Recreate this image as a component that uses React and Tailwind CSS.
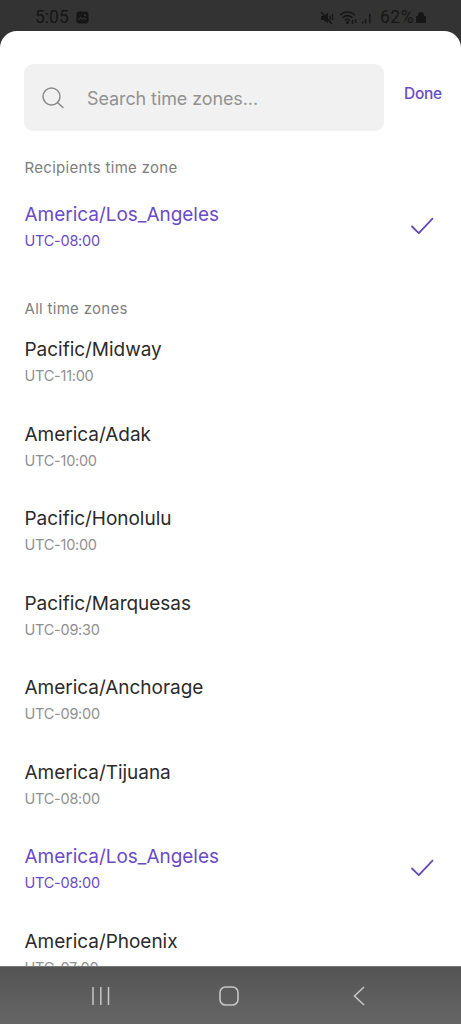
import { useState } from 'react';

const ZONES = [
  { name: 'Pacific/Midway', offset: 'UTC-11:00' },
  { name: 'America/Adak', offset: 'UTC-10:00' },
  { name: 'Pacific/Honolulu', offset: 'UTC-10:00' },
  { name: 'Pacific/Marquesas', offset: 'UTC-09:30' },
  { name: 'America/Anchorage', offset: 'UTC-09:00' },
  { name: 'America/Tijuana', offset: 'UTC-08:00' },
  { name: 'America/Los_Angeles', offset: 'UTC-08:00' },
  { name: 'America/Phoenix', offset: 'UTC-07:00' },
];

const StatusBar = () => (
  <div className="flex h-[31px] shrink-0 items-center pt-[4px] pl-[35px] pr-[35px] text-[17.5px] text-[#161616]">
    <span className="font-['Roboto',sans-serif]">5:05</span>
    <svg className="ml-[7px] h-[13px] w-[13px]" viewBox="0 0 14 14">
      <rect x="0.5" y="0.5" width="13" height="13" rx="3" fill="#161616" />
      <path d="M2.5 9.5 5 7l2 2 2-1.5 2.5 2" fill="none" stroke="#333" strokeWidth="1.2" />
      <circle cx="9.5" cy="4.5" r="1.2" fill="#333" />
    </svg>

    {/* Muted, wifi, signal */}
    <svg className="ml-auto h-[14px] w-[14px]" viewBox="0 0 14 14">
      <path d="M1 5h3l4-3.5v11L4 9H1z" fill="#161616" />
      <path d="M1 1l11 12M10 4.5v5M12.5 3v6" fill="none" stroke="#161616" strokeWidth="1.3" />
    </svg>
    <svg className="ml-[5px] h-[15px] w-[19px]" viewBox="0 0 19 15" fill="none" stroke="#161616" strokeWidth="1.5">
      <path d="M1 5c4.500-4 10.500-4 15 0M3.500 7.800c3-2.600 7-2.600 10 0M6 10.500c1.500-1.400 3.500-1.400 5 0" />
      <circle cx="8.500" cy="12.500" r="0.800" fill="#161616" />
      <path d="M13.500 10v4M16.500 9v4" />
    </svg>
    <svg className="ml-[3px] h-[12px] w-[12px]" viewBox="0 0 12 13" stroke="#161616" strokeWidth="1.5">
      <path d="M1.500 10v2.500M4.500 8v4.500M9 2v10.500" />
    </svg>
    <span className="ml-[7px] font-['Roboto',sans-serif] text-[17.5px] tracking-[0.5px]">62%</span>
    <svg className="ml-[2px] h-[11px] w-[10px]" viewBox="0 0 10 11" fill="#161616">
      <path d="M2 4V3a3 3 0 0 1 6 0v1h1a1 1 0 0 1 1 1v5a1 1 0 0 1-1 1H1a1 1 0 0 1-1-1V5a1 1 0 0 1 1-1z" />
    </svg>
  </div>
);

const SearchIcon = () => (
  <svg className="h-[22px] w-[22px] shrink-0" viewBox="0 0 22 22" fill="none" stroke="#8b8b8b" strokeWidth="1.5" strokeLinecap="round">
    <circle cx="9.5" cy="9.500" r="8.500" />
    <path d="M15.600 15.600 21 20.500" />
  </svg>
);

const CheckMark = () => (
  <svg className="mr-[27px] h-[18px] w-[24px] shrink-0" viewBox="0 0 24 18" fill="none" stroke="#6249b5" strokeWidth="1.800" strokeLinecap="round" strokeLinejoin="round">
    <path d="M2 9.500 8.800 16.200 22.500 1.700" />
  </svg>
);

const ZoneRow = ({ zone, selected, onSelect }) => (
  <button
    onClick={() => onSelect(zone.name)}
    className="flex h-[84.5px] w-full shrink-0 items-start pl-[24.5px] text-left"
  >
    <span className="flex-1">
      <span className={`block text-[19px] leading-[26px] tracking-[-0.03px] ${selected ? 'text-[#6b4bc5]' : 'text-[#2b2b2b]'}`}>
        {zone.name}
      </span>
      <span className={`mt-[3px] block text-[14.5px] leading-[20px] tracking-[-0.25px] ${selected ? 'text-[#6b4bc5]' : 'text-[#909090]'}`}>
        {zone.offset}
      </span>
    </span>
    {selected && (
      <span className="mt-[14.5px]">
        <CheckMark />
      </span>
    )}
  </button>
);

const NavBar = () => (
  <div className="flex h-[58px] shrink-0 items-center border-t border-[#777] bg-linear-to-b from-[#545454] to-[#666] pt-px pl-[91px]">
    <svg className="h-[20px] w-[20px]" viewBox="0 0 20 20" stroke="#c6c6c6" strokeWidth="1.500">
      <path d="M2 1v18M9.800 1v18M17.500 1v18" />
    </svg>
    <svg className="ml-[108px] h-[20px] w-[20px]" viewBox="0 0 20 20" fill="none" stroke="#c6c6c6" strokeWidth="1.600">
      <rect x="1" y="1" width="18" height="18" rx="5.500" />
    </svg>
    <svg className="ml-[114px] h-[20px] w-[12px]" viewBox="0 0 12 20" fill="none" stroke="#c6c6c6" strokeWidth="1.600">
      <path d="M11 1 1.500 10 11 19" />
    </svg>
  </div>
);

export default function App() {
  const [query, setQuery] = useState('');
  const [selected, setSelected] = useState('America/Los_Angeles');

  const recipientZone = ZONES.find((zone) => zone.name === 'America/Los_Angeles');
  const visibleZones = ZONES.filter((zone) =>
    zone.name.toLowerCase().includes(query.toLowerCase())
  );

  return (
    <div className="flex h-[1024px] w-[461px] flex-col overflow-hidden bg-[#333] font-['Inter',sans-serif]">
      <StatusBar />

      <div className="flex min-h-0 flex-1 flex-col overflow-hidden rounded-t-[17px] bg-white">
        {/* Search */}
        <div className="flex shrink-0 items-start pt-[33px] pl-6">
          <label className="flex h-[67px] w-[360px] items-center rounded-[9px] bg-[#f1f1f1] pl-[18px]">
            <SearchIcon />
            <input
              type="text"
              value={query}
              onChange={(e) => setQuery(e.target.value)}
              placeholder="Search time zones..."
              className="ml-[23px] min-w-0 flex-1 bg-transparent pt-[2px] text-[18px] tracking-[-0.1px] text-[#2b2b2b] outline-none placeholder:text-[#929292]"
            />
          </label>
          <button className="mt-[19px] ml-5 text-[15.5px] leading-[22px] font-medium tracking-[-0.3px] text-[#6b4bc5]">
            Done
          </button>
        </div>

        <h2 className="mt-[27px] shrink-0 pl-[24.5px] text-[15px] leading-[20px] font-normal tracking-[0.3px] text-[#7e7e7e]">
          Recipients time zone
        </h2>
        <div className="mt-[24px] shrink-0">
          <ZoneRow
            zone={recipientZone}
            selected={selected === recipientZone.name}
            onSelect={setSelected}
          />
        </div>

        <h2 className="mt-[12px] shrink-0 pl-[24.5px] text-[15px] leading-[20px] font-normal tracking-[0.3px] text-[#7e7e7e]">
          All time zones
        </h2>
        <div className="mt-[18.5px] flex min-h-0 flex-1 flex-col overflow-hidden">
          {visibleZones.map((zone) => (
            <ZoneRow
              key={zone.name}
              zone={zone}
              selected={selected === zone.name}
              onSelect={setSelected}
            />
          ))}
        </div>
      </div>

      <NavBar />
    </div>
  );
}
